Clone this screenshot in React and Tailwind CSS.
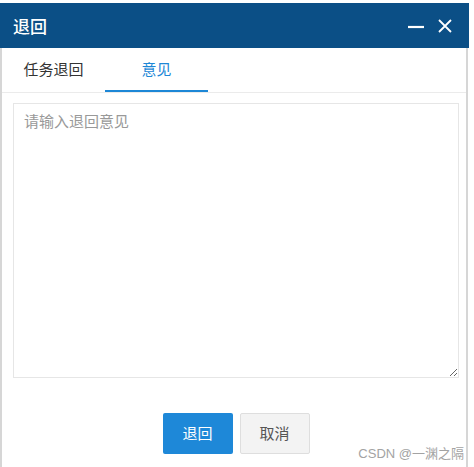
import { useState } from 'react';

const tabs = ['任务退回', '意见'];

const App = () => {
  const [active, setActive] = useState(1);
  const [text, setText] = useState('');

  return (
    <div
      className="relative w-[474px] h-[467px] bg-white overflow-hidden"
      style={{ fontFamily: '"Noto Sans CJK SC", "Noto Sans", sans-serif' }}
    >
      <div className="w-[469px] h-full pt-[3px] flex flex-col">
        {/* header */}
        <div className="h-[45px] bg-[#0b4f86] flex items-center justify-between pl-[13px] pr-[16px] shrink-0">
          <span className="text-white text-[17px] font-medium leading-none">退回</span>
          <div className="flex items-center gap-[12px]">
            <svg width="18" height="18" viewBox="0 0 18 18">
              <path d="M1 10h16" stroke="#fff" strokeWidth="2.2" />
            </svg>
            <svg width="16" height="16" viewBox="0 0 16 16">
              <path d="M2 2l12 12M14 2L2 14" stroke="#fff" strokeWidth="1.8" />
            </svg>
          </div>
        </div>

        {/* body */}
        <div className="flex-1 flex flex-col border-x-2 border-[#d6d6d6] mr-[1px]">
          <div className="h-[45px] flex border-b border-[#ebebeb] shrink-0">
            {tabs.map((t, i) => (
              <button
                key={t}
                onClick={() => setActive(i)}
                className={`w-[103px] h-full flex items-center justify-center text-[15px] border-b-2 -mb-[1px] ${
                  active === i ? 'text-[#1d87d6] border-[#1d87d6]' : 'text-[#333] border-transparent'
                }`}
              >
                {t}
              </button>
            ))}
          </div>

          <textarea
            value={text}
            onChange={(e) => setText(e.target.value)}
            placeholder="请输入退回意见"
            className="mt-[10px] ml-[11px] w-[446px] h-[275px] border border-[#e6e6e6] px-[10px] py-[6px] text-[15px] text-[#333] placeholder:text-[#999] outline-none resize"
          />

          <div className="mt-[35px] flex justify-center gap-[7px] pl-[4px]">
            <button className="w-[70px] h-[41px] rounded-[2px] bg-[#1e88d8] text-white text-[15px]">
              退回
            </button>
            <button className="w-[70px] h-[41px] rounded-[2px] bg-[#f3f3f3] border border-[#dedede] text-[#555] text-[15px]">
              取消
            </button>
          </div>
        </div>
      </div>

      <span
        className="absolute right-[10px] bottom-[7px] text-[13px] text-[#a3a3a3] leading-none"
        style={{ fontFamily: '"Liberation Sans", "Noto Sans CJK SC", sans-serif' }}
      >
        CSDN @一渊之隔
      </span>
    </div>
  );
};

export default App;
